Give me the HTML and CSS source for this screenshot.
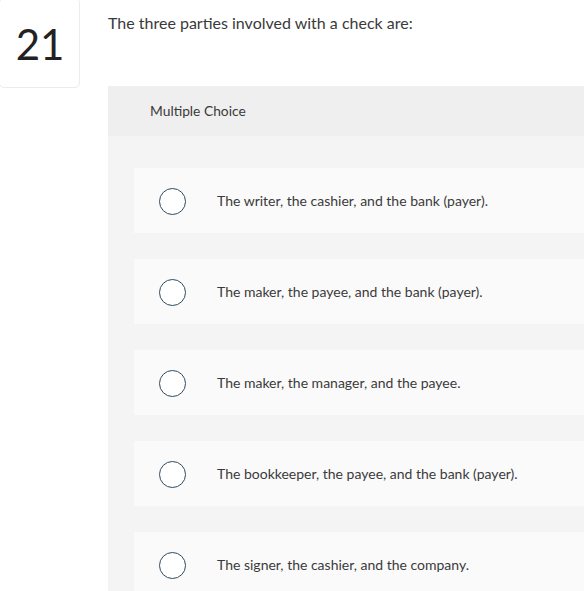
FILE: index.html
```html
<!DOCTYPE html>
<html>
<head>
<meta charset="utf-8">
<link rel="stylesheet" href="styles.css">
</head>
<body>
<div class="page">
  <div class="num-col">
    <div class="num-box">21</div>
  </div>
  <div class="main">
    <div class="question">The three parties involved with a check are:</div>
    <div class="panel">
      <div class="panel-head">Multiple Choice</div>
      <div class="panel-body">
        <div class="option"><span class="radio"></span><span class="label">The writer, the cashier, and the bank (payer).</span></div>
        <div class="option"><span class="radio"></span><span class="label">The maker, the payee, and the bank (payer).</span></div>
        <div class="option"><span class="radio"></span><span class="label">The maker, the manager, and the payee.</span></div>
        <div class="option"><span class="radio"></span><span class="label">The bookkeeper, the payee, and the bank (payer).</span></div>
        <div class="option"><span class="radio"></span><span class="label">The signer, the cashier, and the company.</span></div>
      </div>
    </div>
  </div>
</div>
</body>
</html>
```
FILE: styles.css
```css
* { box-sizing: border-box; }
html, body { margin: 0; padding: 0; background: #fff; overflow: hidden; }
body { font-family: Lato, "Open Sans", sans-serif; color: #333; }
.page { display: flex; width: 584px; height: 591px; }
.num-col { width: 108px; flex: none; }
.num-box {
  width: 81px; height: 90px; margin-left: -1px; margin-top: -2px;
  border: 1px solid #ececec; border-radius: 5px;
  display: flex; align-items: center; justify-content: center;
  font-size: 42px; color: #222; padding-top: 2px; padding-left: 1px;
}
.main { flex: 1; min-width: 0; }
.question { font-size: 16px; line-height: 20px; padding-top: 13px; height: 86px; color: #3a3a3a; }
.panel { background: #f4f4f4; }
.panel-head { background: #efefef; height: 50px; padding-left: 42px; font-size: 13.8px; line-height: 50px; color: #3a3a3a; }
.panel-body { padding: 32px 0 0 26px; display: flex; flex-direction: column; gap: 26px; }
.option { background: #fafafa; height: 65px; display: flex; align-items: center; padding-left: 25px; }
.radio { width: 27px; height: 27px; border-radius: 50%; border: 1.5px solid #2f4a5e; background: #fff; flex: none; margin-top: 1px; }
.label { margin-left: 31px; font-size: 14px; color: #3a3a3a; }
```
